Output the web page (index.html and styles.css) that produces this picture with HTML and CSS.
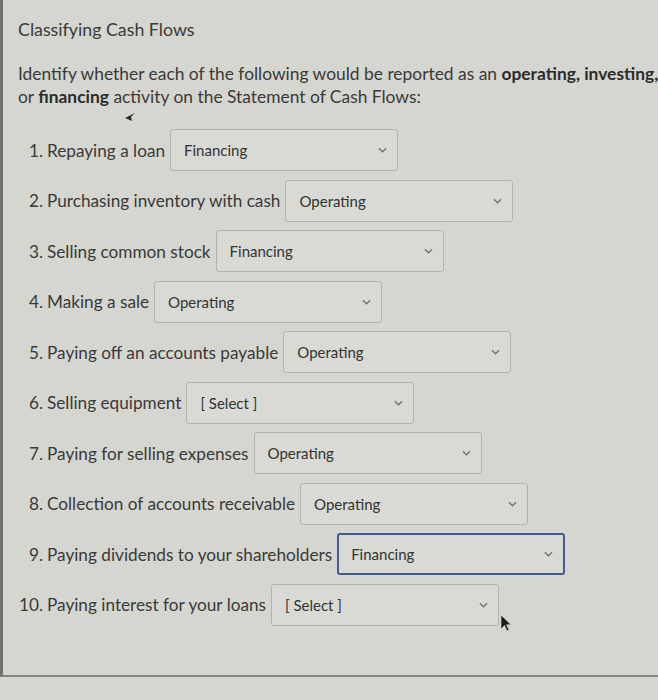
FILE: index.html
```html
<!DOCTYPE html>
<html lang="en">
<head>
  <meta charset="UTF-8">
  <meta name="viewport" content="width=device-width, initial-scale=1.0">
  <title>Classifying Cash Flows</title>
  <link rel="stylesheet" href="styles.css">
</head>
<body>
  <div class="question">
    <h2 class="title">Classifying Cash Flows</h2>
    <p class="prompt">
      Identify whether each of the following would be reported as an <b>operating, investing,</b><br>
      or <b>financing</b> activity on the Statement of Cash Flows:
    </p>

    <div class="items">
      <div class="item">
        <span class="num">1.</span>
        <span class="label">Repaying a loan</span>
        <div class="select"><span>Financing</span><svg class="chev" viewBox="0 0 10 6"><path d="M1 1l4 4 4-4"/></svg></div>
      </div>
      <div class="item">
        <span class="num">2.</span>
        <span class="label">Purchasing inventory with cash</span>
        <div class="select"><span>Operating</span><svg class="chev" viewBox="0 0 10 6"><path d="M1 1l4 4 4-4"/></svg></div>
      </div>
      <div class="item">
        <span class="num">3.</span>
        <span class="label">Selling common stock</span>
        <div class="select"><span>Financing</span><svg class="chev" viewBox="0 0 10 6"><path d="M1 1l4 4 4-4"/></svg></div>
      </div>
      <div class="item">
        <span class="num">4.</span>
        <span class="label">Making a sale</span>
        <div class="select"><span>Operating</span><svg class="chev" viewBox="0 0 10 6"><path d="M1 1l4 4 4-4"/></svg></div>
      </div>
      <div class="item">
        <span class="num">5.</span>
        <span class="label">Paying off an accounts payable</span>
        <div class="select"><span>Operating</span><svg class="chev" viewBox="0 0 10 6"><path d="M1 1l4 4 4-4"/></svg></div>
      </div>
      <div class="item">
        <span class="num">6.</span>
        <span class="label">Selling equipment</span>
        <div class="select"><span>[ Select ]</span><svg class="chev" viewBox="0 0 10 6"><path d="M1 1l4 4 4-4"/></svg></div>
      </div>
      <div class="item">
        <span class="num">7.</span>
        <span class="label">Paying for selling expenses</span>
        <div class="select"><span>Operating</span><svg class="chev" viewBox="0 0 10 6"><path d="M1 1l4 4 4-4"/></svg></div>
      </div>
      <div class="item">
        <span class="num">8.</span>
        <span class="label">Collection of accounts receivable</span>
        <div class="select"><span>Operating</span><svg class="chev" viewBox="0 0 10 6"><path d="M1 1l4 4 4-4"/></svg></div>
      </div>
      <div class="item">
        <span class="num">9.</span>
        <span class="label">Paying dividends to your shareholders</span>
        <div class="select focused"><span>Financing</span><svg class="chev" viewBox="0 0 10 6"><path d="M1 1l4 4 4-4"/></svg></div>
      </div>
      <div class="item">
        <span class="num">10.</span>
        <span class="label">Paying interest for your loans</span>
        <div class="select"><span>[ Select ]</span><svg class="chev" viewBox="0 0 10 6"><path d="M1 1l4 4 4-4"/></svg></div>
        <!-- mouse pointer hovering next to the last dropdown -->
        <svg class="pointer" viewBox="0 0 12 18"><path d="M1 1v14l3.5-3.5 2.5 5.5 2-1-2.5-5.2H11z"/></svg>
      </div>
    </div>

    <svg class="pen-mark" viewBox="0 0 12 10"><path d="M1 6l10-5-4 4 1 4z"/></svg>
  </div>
</body>
</html>
```

FILE: styles.css
```css
* {
  margin: 0;
  padding: 0;
  box-sizing: border-box;
}

body {
  width: 658px;
  height: 700px;
  overflow: hidden;
  background: #d5d6d0;
  font-family: Lato, 'Open Sans', sans-serif;
  color: #3a3a38;
}

.question {
  position: relative;
  height: 677px;
  border-left: 3px solid #73736e;
  border-bottom: 2px solid #85857f;
  padding: 17px 0 0 15px;
}

.title {
  font-size: 17.8px;
  font-weight: 400;
  line-height: 24px;
}

.prompt {
  margin-top: 21px;
  font-size: 17.4px;
  line-height: 23px;
  white-space: nowrap;
}

.prompt b {
  font-weight: 700;
  color: #2c2c2a;
}

.items {
  margin-top: 21px;
  display: flex;
  flex-direction: column;
  gap: 8.5px;
}

.item {
  position: relative;
  display: flex;
  align-items: center;
  height: 42px;
  font-size: 17.2px;
}

.num {
  width: 25px;
  text-align: right;
}

.label {
  margin-left: 4px;
}

.select {
  display: flex;
  align-items: center;
  justify-content: space-between;
  width: 228px;
  height: 42px;
  margin-left: 5px;
  padding: 0 10px 0 13px;
  background: #d9dad4;
  border: 1px solid #b3b3ad;
  border-radius: 3px;
  font-size: 15px;
  color: #333331;
}

.select.focused {
  border: 2px solid #3f5c95;
  padding-left: 12px;
}

.chev {
  width: 9px;
  height: 6px;
  fill: none;
  stroke: #6f6f6a;
  stroke-width: 1.4;
}

.pointer {
  position: absolute;
  left: 482px;
  top: 30px;
  width: 12px;
  height: 18px;
  fill: #1c1c1c;
  stroke: #d5d6d0;
  stroke-width: 0.6;
}

.pen-mark {
  position: absolute;
  left: 121px;
  top: 112px;
  width: 12px;
  height: 10px;
  fill: #2a2a28;
}
```
